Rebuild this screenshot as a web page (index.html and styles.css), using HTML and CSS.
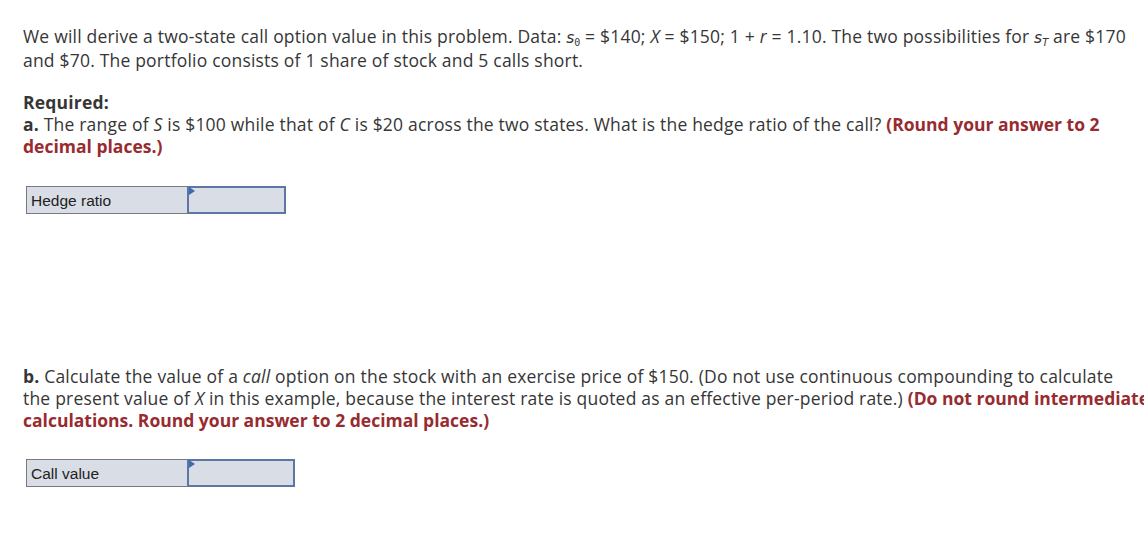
FILE: index.html
```html
<!DOCTYPE html>
<html>
<head>
<meta charset="utf-8">
<link rel="stylesheet" href="styles.css">
</head>
<body>
<div class="page">
  <p class="intro">We will derive a two-state call option value in this problem. Data: <span class="sym">s<sub class="zero">0</sub></span> = $140; <i>X</i> = $150; 1 + <i>r</i> = 1.10. The two possibilities for <span class="sym">s<sub><i>T</i></sub></span> are $170 and $70. The portfolio consists of 1 share of stock and 5 calls short.</p>

  <p class="req-head"><b>Required:</b></p>
  <p class="part"><b>a.</b> The range of <i>S</i> is $100 while that of <i>C</i> is $20 across the two states. What is the hedge ratio of the call? <b class="red">(Round your answer to 2 decimal places.)</b></p>

  <div class="answer answer-a">
    <div class="label">Hedge ratio</div>
    <div class="input"><span class="flag"></span></div>
  </div>

  <p class="part part-b"><b>b.</b> Calculate the value of a <i>call</i> option on the stock with an exercise price of $150. (Do not use continuous compounding to calculate<br>the present value of <i>X</i> in this example, because the interest rate is quoted as an effective per-period rate.) <b class="red">(Do not round intermediate calculations. Round your answer to 2 decimal places.)</b></p>

  <div class="answer answer-b">
    <div class="label">Call value</div>
    <div class="input wide"><span class="flag"></span></div>
  </div>
</div>
</body>
</html>
```
FILE: styles.css
```css
html {
  overflow: hidden;
}
html, body {
  margin: 0;
  padding: 0;
  background: #ffffff;
}
.page {
  width: 1127px;
  padding: 25px 0 0 23px;
  font-family: "Open Sans", "Liberation Sans", sans-serif;
  font-size: 17.5px;
  line-height: 22px;
  letter-spacing: 0.2px;
  color: #363636;
}
p {
  margin: 0;
}
.intro {
  margin-bottom: 20px;
}
b {
  font-weight: 700;
}
.red {
  color: #982b2f;
  letter-spacing: 0;
}
.sym {
  font-family: "DejaVu Sans", sans-serif;
  font-style: italic;
  font-size: 15.5px;
  letter-spacing: 0;
}
.sym sub {
  font-size: 10px;
  vertical-align: -3px;
  line-height: 0;
}
.sym sub.zero {
  font-family: "DejaVu Sans Mono", monospace;
  font-style: normal;
}
.answer {
  display: flex;
  margin-left: 3px;
  height: 28px;
  font-family: "Liberation Sans", Arial, sans-serif;
  font-size: 15.5px;
  letter-spacing: 0;
}
.answer-a {
  margin-top: 29px;
}
.answer-b {
  margin-top: 28px;
}
.label {
  width: 161px;
  box-sizing: border-box;
  background: #d9dde6;
  border: 1px solid #7a7a7a;
  border-right: none;
  padding: 3px 0 0 4px;
  color: #222;
}
.input {
  position: relative;
  width: 99px;
  box-sizing: border-box;
  background: #d9dde6;
  border: 2px solid #5c77a3;
}
.input.wide {
  width: 108px;
}
.flag {
  position: absolute;
  left: 0;
  top: -1px;
  width: 0;
  height: 0;
  border-top: 4px solid transparent;
  border-bottom: 4px solid transparent;
  border-left: 6px solid #3d6bb0;
}
.part-b {
  margin-top: 151px;
  width: 1160px;
}
```
